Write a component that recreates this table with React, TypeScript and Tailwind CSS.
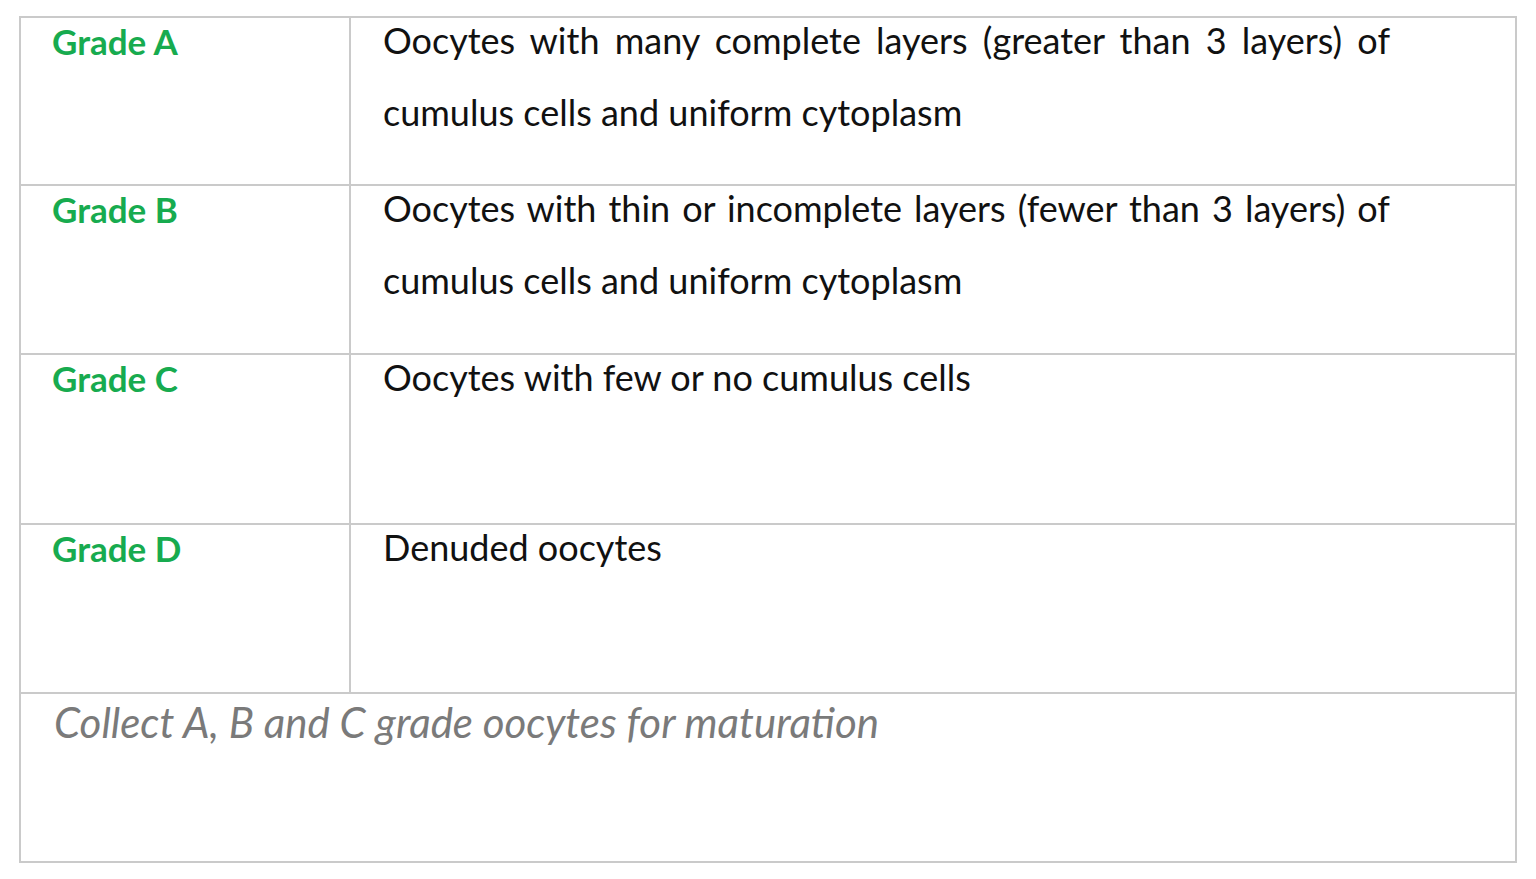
const rows = [
  {
    grade: 'Grade A',
    h: 'h-[168px]',
    lines: ['Oocytes with many complete layers (greater than 3 layers) of', 'cumulus cells and uniform cytoplasm'],
  },
  {
    grade: 'Grade B',
    h: 'h-[169px]',
    lines: ['Oocytes with thin or incomplete layers (fewer than 3 layers) of', 'cumulus cells and uniform cytoplasm'],
  },
  { grade: 'Grade C', h: 'h-[170px]', lines: ['Oocytes with few or no cumulus cells'] },
  { grade: 'Grade D', h: 'h-[169px]', lines: ['Denuded oocytes'] },
];

export default function App() {
  return (
    <div className="min-h-screen bg-white pt-[16px] pl-[19px] font-['Lato',sans-serif]">
      <div className="w-[1498px] border-2 border-[#cacaca] border-b-0">
        {rows.map((r) => (
          <div key={r.grade} className={`flex ${r.h} overflow-hidden border-b-2 border-[#cacaca]`}>
            <div className="w-[330px] shrink-0 border-r-2 border-[#cacaca] pl-[31px]">
              <p className="-mt-[13px] text-[35px] leading-[72px] font-bold text-[#17ab4f]">{r.grade}</p>
            </div>
            <div className="flex-1 pl-[32px]">
              <div className="-mt-[14px] w-[1007px] text-[36px] leading-[72px] text-[#111]">
                {r.lines.map((l, i) => (
                  <p
                    key={i}
                    className={i === 0 && r.lines.length > 1 ? 'text-justify [text-align-last:justify]' : ''}
                  >
                    {l}
                  </p>
                ))}
              </div>
            </div>
          </div>
        ))}
        <div className="h-[169px] overflow-hidden border-b-2 border-[#cacaca] pl-[33px]">
          <p className="-mt-[8px] text-[42px] leading-[72px] italic text-[#7a7a7a]">
            Collect A, B and C grade oocytes for maturation
          </p>
        </div>
      </div>
    </div>
  );
}
